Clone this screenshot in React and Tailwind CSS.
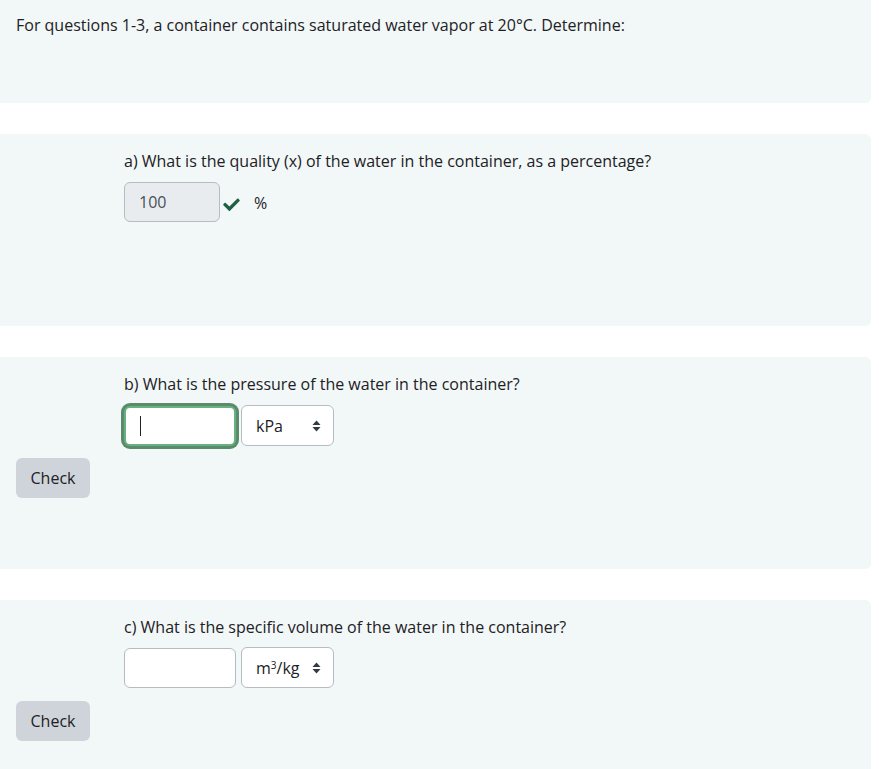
import React from "react";

const font = { fontFamily: '"Open Sans", "Noto Sans", sans-serif' };

function Arrows() {
  return (
    <svg width="9" height="12" viewBox="0 0 9 12" className="shrink-0">
      <path d="M4.5 0.5 L8.5 5 L0.5 5 Z" fill="#343a40" />
      <path d="M4.5 11.5 L8.5 7 L0.5 7 Z" fill="#343a40" />
    </svg>
  );
}

function Select({ children }) {
  return (
    <div className="flex h-[41px] w-[93px] items-center justify-between rounded-[6px] border border-[#b5bcc2] bg-white pl-[14px] pr-[12px] text-[16px] text-[#1d2125]">
      <span>{children}</span>
      <Arrows />
    </div>
  );
}

function CheckBtn() {
  return (
    <div className="flex h-[40px] w-[74px] items-center justify-center rounded-[6px] bg-[#ced4da] text-[16px] text-[#1d2125]">
      Check
    </div>
  );
}

export default function App() {
  return (
    <div className="w-[879px] bg-white pr-[8px] text-[#1d2125]" style={font}>
      <div className="h-[103px] rounded-br-[6px] bg-[#f2f7f7] pl-[16px] pt-[13px] text-[16px] leading-[24px]">
        For questions 1-3, a container contains saturated water vapor at 20°C. Determine:
      </div>

      <div className="mt-[31px] h-[192px] rounded-r-[6px] bg-[#f2f7f7] pl-[124px] pt-[15px]">
        <div className="text-[16px] leading-[24px]">
          a) What is the quality (x) of the water in the container, as a percentage?
        </div>
        <div className="mt-[9px] flex items-center">
          <div className="flex h-[40px] w-[96px] items-center rounded-[6px] border border-[#b5bcc2] bg-[#e9ecef] pl-[14px] text-[16px] text-[#495057]">
            100
          </div>
          <svg width="17" height="13" viewBox="0 0 512 400" className="ml-[3px] mt-[4px]">
            <path
              d="M173.9 389.4L7.5 223c-10-10-10-26.2 0-36.2l36.2-36.2c10-10 26.2-10 36.2 0L192 262.7 432.1 22.5c10-10 26.2-10 36.2 0l36.2 36.2c10 10 10 26.2 0 36.2L210.1 389.4c-10 10-26.2 10-36.2 0z"
              fill="#1f5f44"
            />
          </svg>
          <span className="ml-[14px] mt-[2px] text-[16px]">%</span>
        </div>
      </div>

      <div className="mt-[31px] h-[212px] rounded-r-[6px] bg-[#f2f7f7] pt-[15px]">
        <div className="pl-[124px] text-[16px] leading-[24px]">
          b) What is the pressure of the water in the container?
        </div>
        <div className="mt-[9px] flex items-center pl-[124px]">
          <div className="flex h-[40px] w-[112px] items-center rounded-[6px] border-2 border-[#66b37d] bg-white pl-[14px] ring-[3px] ring-[#5b8b6c]">
            <div className="h-[20px] w-px bg-[#1d2125]" />
          </div>
          <div className="ml-[5px]">
            <Select>kPa</Select>
          </div>
        </div>
        <div className="mt-[12px] pl-[16px]">
          <CheckBtn />
        </div>
      </div>

      <div className="mt-[31px] h-[169px] rounded-tr-[6px] bg-[#f2f7f7] pt-[15px]">
        <div className="pl-[124px] text-[16px] leading-[24px]">
          c) What is the specific volume of the water in the container?
        </div>
        <div className="mt-[8px] flex items-center pl-[124px]">
          <div className="h-[40px] w-[112px] rounded-[6px] border border-[#b5bcc2] bg-white" />
          <div className="ml-[5px]">
            <Select>
              m<sup className="text-[10px]">3</sup>/kg
            </Select>
          </div>
        </div>
        <div className="mt-[13px] pl-[16px]">
          <CheckBtn />
        </div>
      </div>
    </div>
  );
}
